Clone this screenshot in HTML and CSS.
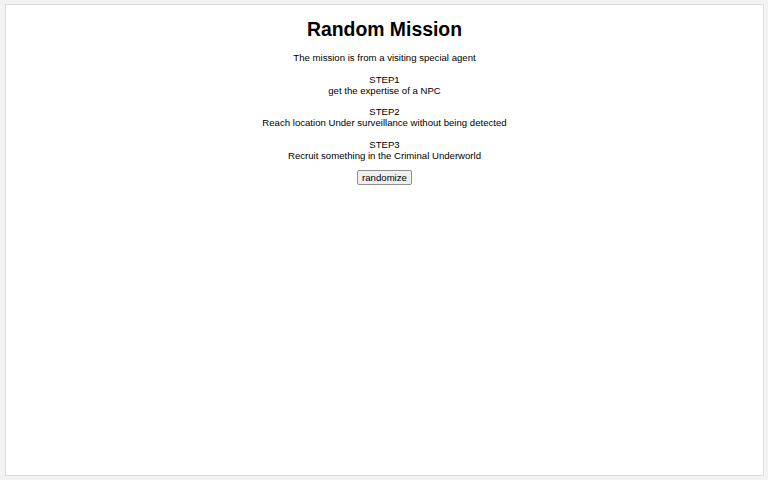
FILE: index.html
```html
<!DOCTYPE html>
<html>
<head>
<meta charset="utf-8">
<link rel="stylesheet" href="styles.css">
</head>
<body>
<div class="card">
  <h1 class="title">Random Mission</h1>
  <p class="intro">The mission is from a visiting special agent</p>
  <div class="step">
    <div class="label">STEP1</div>
    <div class="desc">get the expertise of a NPC</div>
  </div>
  <div class="step">
    <div class="label">STEP2</div>
    <div class="desc">Reach location Under surveillance without being detected</div>
  </div>
  <div class="step">
    <div class="label">STEP3</div>
    <div class="desc">Recruit something in the Criminal Underworld</div>
  </div>
  <div class="actions"><button class="btn">randomize</button></div>
</div>
</body>
</html>
```
FILE: styles.css
```css
html, body {
  margin: 0;
  padding: 0;
}
body {
  background: #f3f3f3;
  padding: 4px 4px 4px 5px;
  font-family: "Liberation Sans", Arial, sans-serif;
  color: #000;
}
.card {
  box-sizing: border-box;
  height: 472px;
  background: #fff;
  border: 1px solid #dcdcdc;
  text-align: center;
  padding-top: 11.5px;
  font-size: 9.6px;
  line-height: 10.8px;
}
.title {
  margin: 0;
  font-size: 19.4px;
  line-height: 24px;
  font-weight: bold;
}
.intro {
  margin: 12.6px 0 0;
}
.step {
  margin-top: 11px;
}
.actions {
  margin-top: 8px;
}
.btn {
  font-family: "Liberation Sans", Arial, sans-serif;
  font-size: 9.6px;
  line-height: 11px;
  padding: 1px 4px;
  background: #efefef;
  border: 1px solid #8f8f8f;
  border-radius: 2px;
  color: #000;
}
```
